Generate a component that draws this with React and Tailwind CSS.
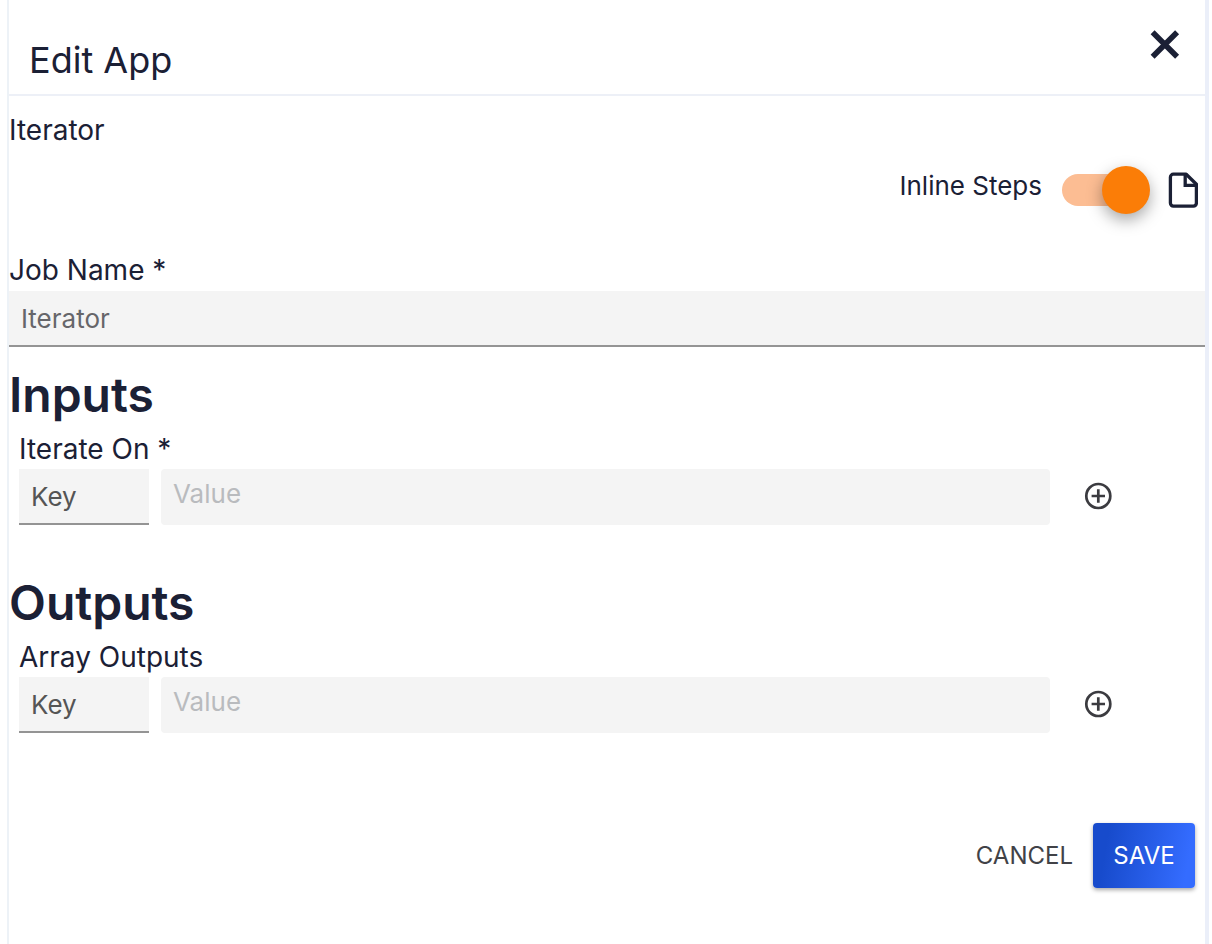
import React, { useState } from 'react';

function App() {
    const [inline, setInline] = useState(true);
    const [jobName, setJobName] = useState("Iterator");

    return (
        <div className="min-h-screen flex bg-white pl-[7px] pr-[3px] font-['Inter',sans-serif] text-[#1b2035]">
            <div className="flex-1 min-w-0 border-l-2 border-r-4 border-l-[#edf2f7] border-r-[#ebeff9]">
                <header className="flex justify-between border-b-2 border-[#edf0f7] pl-5 pr-6 pb-1.5 pt-7">
                    <h1 className="text-[36px] leading-[56px] pt-1">Edit App</h1>
                    <button type="button" aria-label="Close" className="w-8 h-8">
                        <CloseIcon />
                    </button>
                </header>

                <p className="pt-4 text-[28px] leading-9">Iterator</p>

                <div className="flex justify-end items-start pt-[18px] pr-[7px]">
                    <label htmlFor="inline" className="text-[26px] leading-10 mr-5">Inline Steps</label>
                    <Toggle id="inline" checked={inline} onChange={() => setInline(!inline)} />
                    <button type="button" aria-label="Open document" className="ml-[18px] mt-1.5">
                        <FileIcon />
                    </button>
                </div>

                <div className="pt-[38px]">
                    <label htmlFor="jobName" className="block text-[28px] leading-9">Job Name *</label>
                    <input
                        id="jobName"
                        type="text"
                        value={jobName}
                        onChange={e => setJobName(e.target.value)}
                        className="block w-full h-14 mt-[3px] px-3 bg-[#f4f4f4] border-b-2 border-[#949494] text-[26px] text-[#66666a] outline-none"
                    />
                </div>

                <Section title="Inputs" label="Iterate On *" id="inputs" />
                <Section title="Outputs" label="Array Outputs" id="outputs" />

                <footer className="flex justify-end items-center pt-[60px] pr-[10px]">
                    <button type="button" className="h-16 px-5 text-[24px] text-[#414247]">CANCEL</button>
                    <button
                        type="button"
                        className="h-[65px] w-[102px] rounded text-[24px] text-white bg-linear-100 from-[#174bcc] from-15% to-[#346cff] to-90% shadow-[0_2px_4px_rgba(0,0,0,0.35)]"
                    >
                        SAVE
                    </button>
                </footer>
            </div>
        </div>
    );
}

function Section({ title, label, id }) {
    return (
        <section className="pt-5 pb-[30px]">
            <h2 className="text-[48px] leading-14 font-semibold">{title}</h2>
            <div className="pl-[10px]">
                <label htmlFor={`${id}-key`} className="block pt-2 text-[28px] leading-9">{label}</label>
                <div className="flex items-center pt-0.5">
                    <input
                        id={`${id}-key`}
                        type="text"
                        placeholder="Key"
                        className="w-[130px] h-14 px-3 bg-[#f4f4f4] border-b-2 border-[#949494] text-[26px] placeholder:text-[#555555] outline-none"
                    />
                    <input
                        type="text"
                        aria-label={`${label} value`}
                        placeholder="Value"
                        className="flex-1 min-w-0 h-14 ml-3 px-3 pb-2 bg-[#f4f4f4] rounded text-[26px] placeholder:text-[#b9bbbe] outline-none"
                    />
                    <button type="button" aria-label="Add" className="ml-8 mr-[91px] pb-0.5">
                        <PlusCircle />
                    </button>
                </div>
            </div>
        </section>
    );
}

function Toggle({ id, checked, onChange }) {
    return (
        <span className="relative flex items-center w-[88px] h-12">
            <input
                id={id}
                type="checkbox"
                role="switch"
                checked={checked}
                onChange={onChange}
                className="peer absolute inset-0 z-10 w-full h-full opacity-0 cursor-pointer"
            />
            <span className="w-20 h-8 rounded-full bg-gray-300 peer-checked:bg-[#fcbd93]" />
            <span className="absolute left-0 top-0 w-12 h-12 rounded-full bg-gray-100 shadow-[0_6px_16px_rgba(0,0,0,0.35)] peer-checked:left-10 peer-checked:bg-[#fb7d07]" />
        </span>
    );
}

const CloseIcon = () => (
    <svg viewBox="0 0 32 32" className="w-8 h-8" stroke="currentColor" strokeWidth="5.6" strokeLinejoin="round">
        <path d="M3.6 4.2l24.5 24.5M28.1 4.2l-24.5 24.5" />
    </svg>
);

const FileIcon = () => (
    <svg viewBox="0 0 30 36" className="w-[30px] h-9" fill="none" stroke="currentColor" strokeWidth="3.3">
        <path strokeLinejoin="round" d="M18.2 2.2H5.4a3 3 0 0 0-3 3v25.9a3 3 0 0 0 3 3h20a3 3 0 0 0 3-3V12.2z" />
        <path d="M17.2 2.2v11.1h11.2" />
    </svg>
);

const PlusCircle = () => (
    <svg viewBox="0 0 32 32" className="w-8 h-8" fill="none" stroke="#3b3b40" strokeWidth="2.7">
        <circle cx="16.3" cy="16" r="12" />
        <path d="M16.3 9.3v13.4M9.6 16h13.4" />
    </svg>
);

export default App;
